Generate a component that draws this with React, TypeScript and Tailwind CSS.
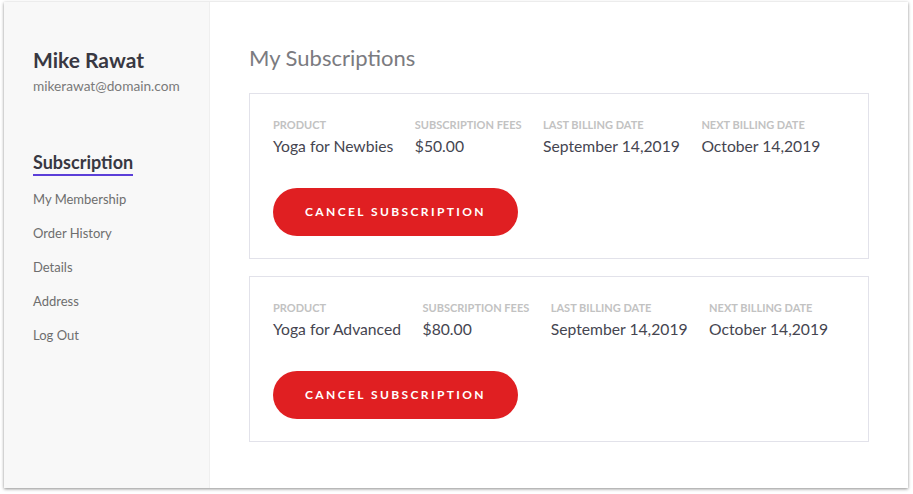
const navItems = ['My Membership', 'Order History', 'Details', 'Address', 'Log Out']

const subscriptions = [
  { product: 'Yoga for Newbies', fee: '$50.00', last: 'September 14,2019', next: 'October 14,2019' },
  { product: 'Yoga for Advanced', fee: '$80.00', last: 'September 14,2019', next: 'October 14,2019' },
]

function Field({ label, value }: { label: string; value: string }) {
  return (
    <div className="flex flex-col">
      <span className="text-[11px] font-bold uppercase leading-[14px] text-[#c2c2c2]">{label}</span>
      <span className="mt-[4px] text-[15.7px] leading-[20px] text-[#454550]">{value}</span>
    </div>
  )
}

function SubscriptionCard({ sub }: { sub: (typeof subscriptions)[number] }) {
  return (
    <div className="border border-[#e2e2ea] px-[23px] pt-[24px] pb-[22px]">
      <div className="flex gap-[21.5px]">
        <Field label="Product" value={sub.product} />
        <Field label="Subscription Fees" value={sub.fee} />
        <Field label="Last Billing Date" value={sub.last} />
        <Field label="Next Billing Date" value={sub.next} />
      </div>
      <button className="mt-[32px] h-[48px] w-[245px] rounded-full bg-[#e01f22] text-[12px] font-bold uppercase tracking-[0.2em] text-white">
        Cancel Subscription
      </button>
    </div>
  )
}

export default function App() {
  return (
    <div className="h-[494px] w-[913px] bg-white pl-[4px] pt-[2px] font-['Lato',sans-serif]">
      <div className="flex h-[486px] w-[904px] shadow-[0_1px_3px_rgba(0,0,0,0.45)]">
        <aside className="w-[206px] shrink-0 border-r border-[#efefef] bg-[#f8f8f8] pl-[29px] pt-[46px]">
          <div className="text-[21px] font-bold leading-[24px] text-[#383842]">Mike Rawat</div>
          <div className="mt-[5px] text-[13.7px] leading-[18px] text-[#7a7a7a]">mikerawat@domain.com</div>
          <div className="mt-[56px] inline-block border-b-2 border-[#5b3fd8] pb-[1px] text-[18px] font-bold leading-[22px] text-[#383842]">
            Subscription
          </div>
          <nav className="mt-[14px] flex flex-col gap-[16px]">
            {navItems.map(item => (
              <a key={item} className="text-[13px] leading-[18px] text-[#6e6e6e]">
                {item}
              </a>
            ))}
          </nav>
        </aside>
        <main className="flex-1 pl-[39px] pr-[39px] pt-[42px]">
          <h1 className="text-[22px] leading-[28px] text-[#7b7b80]">My Subscriptions</h1>
          <div className="mt-[21px] flex flex-col gap-[17px]">
            {subscriptions.map(s => (
              <SubscriptionCard key={s.product} sub={s} />
            ))}
          </div>
        </main>
      </div>
    </div>
  )
}
